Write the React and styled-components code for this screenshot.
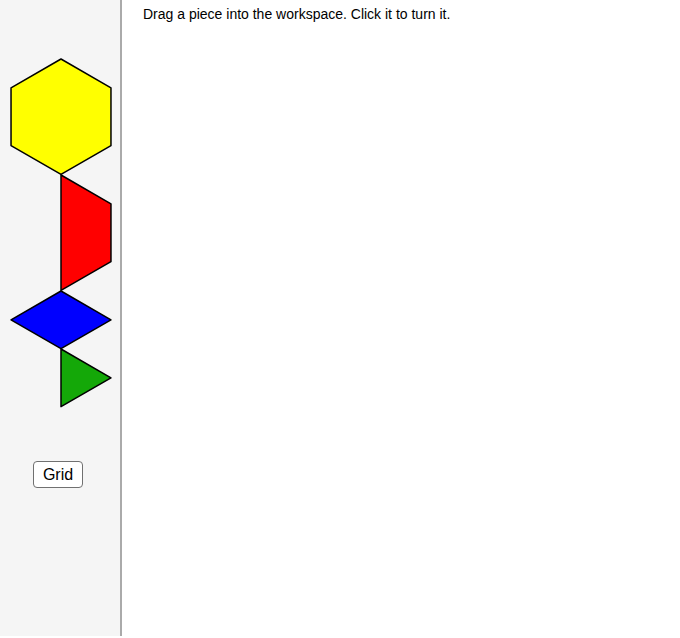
import React from 'react'
import styled, {createGlobalStyle} from 'styled-components'

const GlobalStyle = createGlobalStyle`
    body {
        margin: 0;
        font-family: "Liberation Sans", Arial, sans-serif;
        background: #fff;
    }
`

const S = 57.7
const H = S * Math.sqrt(3) / 2

const pieces = [
    {name: 'hexagon', fill: '#ffff00', points: [
        [61, 59], [61 + H, 59 + S / 2], [61 + H, 59 + S * 1.5],
        [61, 59 + 2 * S], [61 - H, 59 + S * 1.5], [61 - H, 59 + S / 2]
    ]},
    {name: 'trapezoid', fill: '#ff0000', points: [
        [61, 175], [61 + H, 175 + S / 2], [61 + H, 175 + S * 1.5], [61, 175 + 2 * S]
    ]},
    {name: 'rhombus', fill: '#0000ff', points: [
        [61, 291], [61 + H, 291 + S / 2], [61, 291 + S], [61 - H, 291 + S / 2]
    ]},
    {name: 'triangle', fill: '#14a808', points: [
        [61, 349], [61 + H, 349 + S / 2], [61, 349 + S]
    ]},
]

const App = () => {
    return (
        <>
            <GlobalStyle/>
            <Page>
                <Palette>
                    <PieceTray viewBox="0 0 120 420" width="120" height="420">
                        {pieces.map(p => (
                            <polygon
                                key={p.name}
                                points={p.points.map(pt => pt.join(',')).join(' ')}
                                fill={p.fill}
                                stroke="#000"
                                strokeWidth="1.5"
                                strokeLinejoin="round"
                            />
                        ))}
                    </PieceTray>
                    <GridButton>Grid</GridButton>
                </Palette>
                <Workspace>
                    <Hint>Drag a piece into the workspace. Click it to turn it.</Hint>
                </Workspace>
            </Page>
        </>
    )
}

const Page = styled.div`
    display: flex;
    height: 636px;
`
const Palette = styled.aside`
    width: 120px;
    flex-shrink: 0;
    background: #f5f5f5;
    border-right: 2px solid #aaaaaa;
    display: flex;
    flex-direction: column;
    align-items: flex-start;
`
const PieceTray = styled.svg`
    display: block;
`
const GridButton = styled.button`
    margin: 41px 0 0 33px;
    width: 50px;
    height: 27px;
    padding: 0;
    font-family: "Liberation Sans", Arial, sans-serif;
    font-size: 16px;
    color: #000;
    background: #fff;
    border: 1px solid #707070;
    border-radius: 4px;
`
const Workspace = styled.main`
    flex: 1;
    padding: 6px 21px;
`
const Hint = styled.div`
    font-size: 14px;
    color: #000;
`

export default App
